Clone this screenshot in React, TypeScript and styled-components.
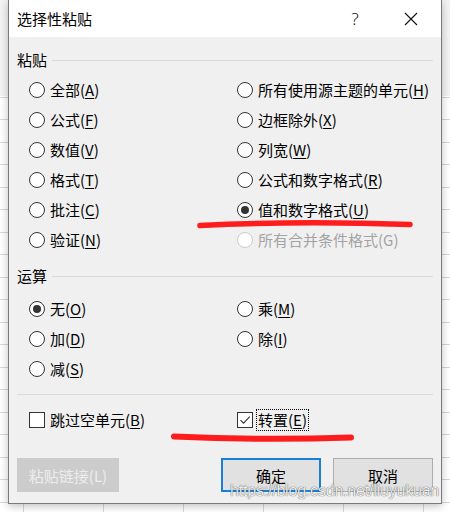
import React, { ReactElement, ReactNode } from 'react';
import styled, { createGlobalStyle } from 'styled-components';

const GlobalStyle = createGlobalStyle`
  html, body {
    margin: 0;
    padding: 0;
  }

  body {
    font-family: "Noto Sans CJK SC", "Noto Sans", sans-serif;
    color: #000;
  }
`;

const Desktop = styled.div`
  position: relative;
  width: 450px;
  height: 512px;
  overflow: hidden;
  background-color: #fff;
  background-image:
    linear-gradient(to bottom, #f3f3f3 0, #f3f3f3 96px, transparent 96px),
    repeating-linear-gradient(to right, #d6d6d6 0 1px, transparent 1px 80px),
    repeating-linear-gradient(to bottom, #d6d6d6 0 1px, transparent 1px 22.5px);
  background-position: 0 0, 23px 0, 0 7px;
`;

const Dialog = styled.section`
  width: 434px;
  height: 504px;
  margin-left: 8px;
  box-sizing: border-box;
  border: 1px solid #7a7a7a;
  border-top: none;
  background: #f0f0f0;
  box-shadow: 0 2px 8px rgba(0, 0, 0, 0.25);
  display: flex;
  flex-direction: column;
`;

const TitleBar = styled.header`
  height: 37px;
  flex-shrink: 0;
  background: #fff;
  display: flex;
  align-items: center;
  padding: 0 7px 0 8px;
`;

const Title = styled.h1`
  margin: 0;
  font-size: 15px;
  font-weight: normal;
  line-height: 20px;
`;

const TitleButton = styled.button<{ $gap?: number }>`
  width: 46px;
  height: 30px;
  margin-left: ${({ $gap }) => ($gap === undefined ? 'auto' : `${$gap}px`)};
  border: none;
  background: transparent;
  padding: 0;
  display: flex;
  align-items: center;
  justify-content: center;
  font-family: "Noto Sans", sans-serif;
  font-size: 17px;
  font-weight: 300;
  color: #111;
`;

const Body = styled.div`
  flex: 1;
  display: flex;
  flex-direction: column;
  padding: 0 8px 0 8px;
`;

const SectionHeader = styled.div<{ $top: number }>`
  display: flex;
  align-items: center;
  gap: 5px;
  height: 20px;
  margin-top: ${({ $top }) => $top}px;
  font-size: 15px;
  line-height: 20px;

  &::after {
    content: '';
    flex: 1;
    height: 1px;
    background: #dadada;
  }
`;

const OptionGrid = styled.div<{ $top: number }>`
  display: grid;
  grid-template-columns: 208px 1fr;
  grid-auto-rows: 30px;
  padding-left: 12px;
  margin-top: ${({ $top }) => $top}px;
`;

const Option = styled.label<{ $disabled?: boolean }>`
  display: flex;
  align-items: center;
  gap: 5px;
  font-size: 15px;
  line-height: 20px;
  white-space: nowrap;
  color: ${({ $disabled }) => ($disabled ? '#a3a3a3' : '#000')};
`;

const Radio = styled.span<{ $checked?: boolean; $disabled?: boolean }>`
  width: 16px;
  height: 16px;
  box-sizing: border-box;
  flex-shrink: 0;
  border-radius: 50%;
  border: 1px solid ${({ $disabled }) => ($disabled ? '#cccccc' : '#333')};
  background: #fff;
  display: flex;
  align-items: center;
  justify-content: center;

  &::after {
    content: '';
    display: ${({ $checked }) => ($checked ? 'block' : 'none')};
    width: 8px;
    height: 8px;
    border-radius: 50%;
    background: #333;
  }
`;

const Checkbox = styled.span`
  width: 16px;
  height: 16px;
  box-sizing: border-box;
  flex-shrink: 0;
  border: 1px solid #333;
  background: #fff;
  display: flex;
  align-items: center;
  justify-content: center;
`;

const Focus = styled.span`
  border: 1px dotted #000;
  padding: 0 1px;
  margin-left: -2px;
`;

const Key = styled.u`
  text-decoration: underline;
  text-decoration-thickness: 1px;
  text-underline-offset: 2px;
`;

const Separator = styled.hr`
  margin: 10px 0 0;
  border: none;
  height: 1px;
  background: #dadada;
`;

const ButtonRow = styled.div`
  display: flex;
  gap: 12px;
  margin-top: 23px;
  height: 34px;
`;

const Button = styled.button<{ $variant?: 'default' | 'primary' | 'disabled'; $width: number }>`
  width: ${({ $width }) => $width}px;
  height: 34px;
  box-sizing: border-box;
  padding: 0;
  font-family: "Noto Sans CJK SC", sans-serif;
  font-size: 15px;
  color: ${({ $variant }) => ($variant === 'disabled' ? '#ececec' : '#000')};
  background: ${({ $variant }) => ($variant === 'disabled' ? '#cccccc' : '#e1e1e1')};
  border: ${({ $variant }) =>
    $variant === 'primary'
      ? '2px solid #1a7fd6'
      : $variant === 'disabled'
        ? '1px solid #cccccc'
        : '1px solid #adadad'};

  &:first-child {
    margin-right: auto;
  }
`;

const Marks = styled.svg`
  position: absolute;
  left: 0;
  top: 0;
  pointer-events: none;
`;

const Watermark = styled.span`
  position: absolute;
  left: 230px;
  top: 482px;
  font-family: "Liberation Sans", Arial, sans-serif;
  font-size: 16px;
  letter-spacing: -0.2px;
  color: rgba(255, 255, 255, 0.92);
  text-shadow: 0 0 1px rgba(0, 0, 0, 0.6), 0 0 1px rgba(0, 0, 0, 0.4);
  pointer-events: none;
`;

const CheckMark = (): ReactElement => (
  <svg width="12" height="12" viewBox="0 0 12 12">
    <path d="M1.5 6.2 L4.5 9.2 L10.8 2.6" fill="none" stroke="#333" strokeWidth="1.1" />
  </svg>
);

const CloseIcon = (): ReactElement => (
  <svg width="14" height="14" viewBox="0 0 14 14">
    <path d="M1 1 L13 13 M13 1 L1 13" stroke="#111" strokeWidth="1.1" />
  </svg>
);

const withKey = (text: string, key: string): ReactNode => (
  <span>
    {text}(<Key>{key}</Key>)
  </span>
);

interface RadioOption {
  label: string;
  accessKey: string;
  checked?: boolean;
  disabled?: boolean;
}

const pasteOptions: RadioOption[] = [
  { label: '全部', accessKey: 'A' },
  { label: '所有使用源主题的单元', accessKey: 'H' },
  { label: '公式', accessKey: 'F' },
  { label: '边框除外', accessKey: 'X' },
  { label: '数值', accessKey: 'V' },
  { label: '列宽', accessKey: 'W' },
  { label: '格式', accessKey: 'T' },
  { label: '公式和数字格式', accessKey: 'R' },
  { label: '批注', accessKey: 'C' },
  { label: '值和数字格式', accessKey: 'U', checked: true },
  { label: '验证', accessKey: 'N' },
  { label: '所有合并条件格式', accessKey: 'G', disabled: true },
];

const operationOptions: RadioOption[] = [
  { label: '无', accessKey: 'O', checked: true },
  { label: '乘', accessKey: 'M' },
  { label: '加', accessKey: 'D' },
  { label: '除', accessKey: 'I' },
  { label: '减', accessKey: 'S' },
];

const RadioList = ({ options, top }: { options: RadioOption[]; top: number }): ReactElement => (
  <OptionGrid $top={top}>
    {options.map((o) => (
      <Option key={o.label} $disabled={o.disabled}>
        <Radio $checked={o.checked} $disabled={o.disabled} />
        {o.disabled ? <span>{o.label}({o.accessKey})</span> : withKey(o.label, o.accessKey)}
      </Option>
    ))}
  </OptionGrid>
);

export default function App(): ReactElement {
  return (
    <Desktop>
      <GlobalStyle />
      <Dialog>
        <TitleBar>
          <Title>选择性粘贴</Title>
          <TitleButton>?</TitleButton>
          <TitleButton $gap={10}>
            <CloseIcon />
          </TitleButton>
        </TitleBar>
        <Body>
          <SectionHeader $top={13}>粘贴</SectionHeader>
          <RadioList options={pasteOptions} top={5} />

          <SectionHeader $top={11}>运算</SectionHeader>
          <RadioList options={operationOptions} top={8} />

          <Separator />

          <OptionGrid $top={10}>
            <Option>
              <Checkbox />
              {withKey('跳过空单元', 'B')}
            </Option>
            <Option>
              <Checkbox>
                <CheckMark />
              </Checkbox>
              <Focus>{withKey('转置', 'E')}</Focus>
            </Option>
          </OptionGrid>

          <ButtonRow>
            <Button $variant="disabled" $width={102}>
              粘贴链接(L)
            </Button>
            <Button $variant="primary" $width={100}>
              确定
            </Button>
            <Button $width={100}>取消</Button>
          </ButtonRow>
        </Body>
      </Dialog>

      <Marks width="450" height="512">
        <path d="M200 225.5 Q300 220.5 410 224.5" fill="none" stroke="#ff1c1c" strokeWidth="5.5" strokeLinecap="round" />
        <path d="M174 436.5 Q262 440.5 351 437.5" fill="none" stroke="#ff1c1c" strokeWidth="6" strokeLinecap="round" />
      </Marks>
      <Watermark>https://blog.csdn.net/liuyukuan</Watermark>
    </Desktop>
  );
}
